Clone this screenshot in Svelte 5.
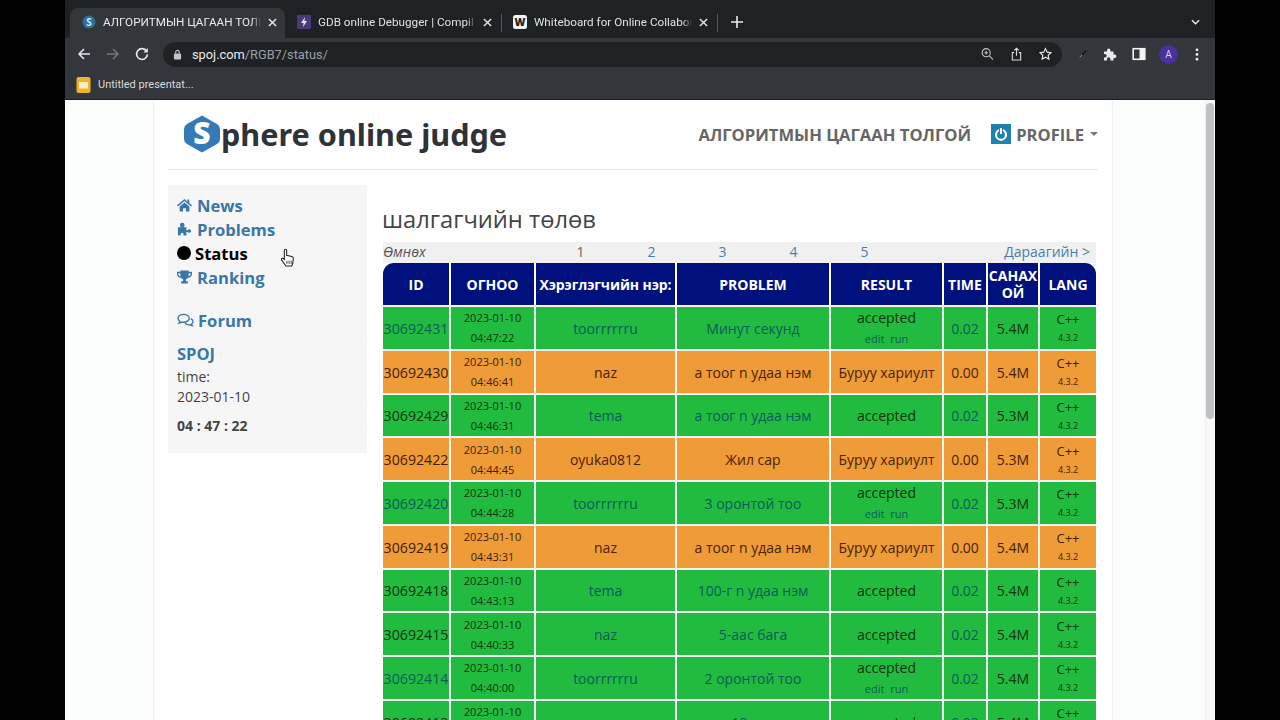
<script>
  const rows = [
    { id: '30692431', t: '04:47:22', u: 'toorrrrrru', p: 'Минут секунд', ok: true, er: true, tm: '0.02', m: '5.4M', idl: true },
    { id: '30692430', t: '04:46:41', u: 'naz', p: 'а тоог n удаа нэм', ok: false, tm: '0.00', m: '5.4M' },
    { id: '30692429', t: '04:46:31', u: 'tema', p: 'а тоог n удаа нэм', ok: true, tm: '0.02', m: '5.3M' },
    { id: '30692422', t: '04:44:45', u: 'oyuka0812', p: 'Жил сар', ok: false, tm: '0.00', m: '5.3M' },
    { id: '30692420', t: '04:44:28', u: 'toorrrrrru', p: '3 оронтой тоо', ok: true, er: true, tm: '0.02', m: '5.3M', idl: true },
    { id: '30692419', t: '04:43:31', u: 'naz', p: 'а тоог n удаа нэм', ok: false, tm: '0.00', m: '5.4M' },
    { id: '30692418', t: '04:43:13', u: 'tema', p: '100-г n удаа нэм', ok: true, tm: '0.02', m: '5.4M' },
    { id: '30692415', t: '04:40:33', u: 'naz', p: '5-аас бага', ok: true, tm: '0.02', m: '5.4M' },
    { id: '30692414', t: '04:40:00', u: 'toorrrrrru', p: '2 оронтой тоо', ok: true, er: true, tm: '0.02', m: '5.4M', idl: true },
    { id: '30692413', t: '04:39:41', u: 'aaa', p: '18 нас', ok: true, tm: '0.02', m: '5.4M' }
  ];
  const heads = ['ID', 'ОГНОО', 'Хэрэглэгчийн нэр:', 'PROBLEM', 'RESULT', 'TIME', 'САНАХ ОЙ', 'LANG'];
  const pages = ['1', '2', '3', '4', '5'];
</script>

<div class="screen">
  <div class="browser">
    <div class="tabs">
      <div class="tab active">
        <svg class="fav" viewBox="0 0 14 14"><circle cx="7" cy="7" r="6.5" fill="#2f6f9f"/><text x="7" y="10.5" text-anchor="middle" font-size="10" font-weight="700" fill="#d5e6f2" font-family="Open Sans">S</text></svg>
        <span class="tab-title">АЛГОРИТМЫН ЦАГААН ТОЛГ</span>
        <svg class="x" viewBox="0 0 10 10"><path d="M1 1l8 8M9 1l-8 8" stroke="#e8eaed" stroke-width="1.5"/></svg>
      </div>
      <div class="tab">
        <svg class="fav" viewBox="0 0 14 14"><rect width="14" height="14" rx="1" fill="#4b3a78"/><path d="M8 2L4 8h2.6L6 12l4-6H7.4z" fill="#e8e4f2"/></svg>
        <span class="tab-title">GDB online Debugger | Compil</span>
        <svg class="x" viewBox="0 0 10 10"><path d="M1 1l8 8M9 1l-8 8" stroke="#e8eaed" stroke-width="1.5"/></svg>
      </div>
      <i class="sep"></i>
      <div class="tab">
        <svg class="fav" viewBox="0 0 14 14"><rect width="14" height="14" rx="2.5" fill="#f4f4f4"/><text x="7" y="11" text-anchor="middle" font-size="10.5" font-weight="800" fill="#222" font-family="Open Sans">W</text></svg>
        <span class="tab-title">Whiteboard for Online Collabor</span>
        <svg class="x" viewBox="0 0 10 10"><path d="M1 1l8 8M9 1l-8 8" stroke="#e8eaed" stroke-width="1.5"/></svg>
      </div>
      <i class="sep"></i>
      <svg class="plus" viewBox="0 0 12 12"><path d="M6 0v12M0 6h12" stroke="#e8eaed" stroke-width="1.6"/></svg>
      <svg class="chev" viewBox="0 0 10 6"><path d="M1 1l4 4 4-4" fill="none" stroke="#e8eaed" stroke-width="1.6"/></svg>
    </div>

    <div class="toolbar">
      <svg class="nav" viewBox="0 0 14 14"><path d="M13 7H2M7 2L2 7l5 5" fill="none" stroke="#e8eaed" stroke-width="1.5"/></svg>
      <svg class="nav" viewBox="0 0 14 14"><path d="M1 7h11M7 2l5 5-5 5" fill="none" stroke="#75777a" stroke-width="1.5"/></svg>
      <svg class="nav" viewBox="0 0 14 14"><path d="M11.6 4.2A5.4 5.4 0 1 0 12.4 7.4" fill="none" stroke="#e8eaed" stroke-width="1.6"/><path d="M12.8 1v4.4H8.4z" fill="#e8eaed"/></svg>
      <div class="omni">
        <svg class="lock" viewBox="0 0 10 12"><rect x="1" y="5" width="8" height="6.5" rx="1" fill="#c4c7ca"/><path d="M3 5V3.4a2 2 0 0 1 4 0V5" fill="none" stroke="#c4c7ca" stroke-width="1.2"/></svg>
        <span class="url">spoj.com<span class="dim">/RGB7/status/</span></span>
        <span class="grow"></span>
        <svg class="oi" viewBox="0 0 14 14"><circle cx="5.6" cy="5.6" r="4.4" fill="none" stroke="#bdc1c6" stroke-width="1.2"/><path d="M9 9l4 4M3.6 5.6h4M5.6 3.6v4" stroke="#bdc1c6" stroke-width="1.2"/></svg>
        <svg class="oi" viewBox="0 0 14 14"><path d="M4.5 5.5H2.5v8h9v-8h-2M7 9V1M4.6 3.2L7 .9l2.4 2.3" fill="none" stroke="#dadce0" stroke-width="1.2"/></svg>
        <svg class="oi" viewBox="0 0 14 14"><path d="M7 1.2l1.8 3.8 4.1.5-3 2.9.8 4.1L7 10.500l-3.700 2 .8-4.100-3-2.900 4.100-.5z" fill="none" stroke="#e8eaed" stroke-width="1.200"/></svg>
      </div>
      <svg class="ext pen" viewBox="0 0 12 12"><path d="M2 10l3-3" stroke="#8a8c8e" stroke-width="1.2"/><path d="M5 7l5-5" stroke="#111" stroke-width="1.4"/></svg>
      <svg class="ext" viewBox="0 0 14 14"><path d="M1 4.500h3V3.200a1.700 1.700 0 0 1 3.400 0v1.300h3.100v3h1.200a1.700 1.700 0 0 1 0 3.400h-1.200v2.600H7.400V12a1.700 1.700 0 0 0-3.400 0v1.500H1v-3.100h1a1.700 1.700 0 0 0 0-3.400H1z" fill="#e8eaed"/></svg>
      <svg class="ext" viewBox="0 0 14 14"><rect x="1.200" y="1.700" width="11.600" height="10.600" fill="none" stroke="#f1f3f4" stroke-width="1.600"/><rect x="7.500" y="2" width="5" height="10" fill="#f1f3f4"/></svg>
      <span class="avatar">A</span>
      <svg class="dots" viewBox="0 0 4 14"><circle cx="2" cy="2" r="1.500" fill="#e8eaed"/><circle cx="2" cy="7" r="1.500" fill="#e8eaed"/><circle cx="2" cy="12" r="1.500" fill="#e8eaed"/></svg>
    </div>

    <div class="bookmarks">
      <svg class="slides" viewBox="0 0 14 16"><rect width="14" height="16" rx="2" fill="#f0b429"/><rect x="2.500" y="5" width="9" height="6.500" fill="#fbeec2"/></svg>
      <span>Untitled presentat...</span>
    </div>

    <div class="page">
      <div class="container">
        <header class="site-head">
          <div class="logo">
            <svg class="hex" viewBox="0 0 36 38"><path d="M18 0.500L33 9q3 1.800 3 5v10q0 3.200-3 5L18 37.500 3 29q-3-1.800-3-5V14q0-3.200 3-5z" fill="#337ab7"/><text x="18" y="29" text-anchor="middle" font-size="30" font-weight="800" fill="#fff" font-family="Open Sans">S</text></svg>
            <span>phere online judge</span>
          </div>
          <div class="head-right">
            <span class="cname">АЛГОРИТМЫН ЦАГААН ТОЛГОЙ</span>
            <svg class="power" viewBox="0 0 20 20"><rect width="20" height="20" fill="#1f7fae"/><circle cx="10" cy="10.800" r="5" fill="none" stroke="#fff" stroke-width="2.200"/><path d="M10 4v6" stroke="#1f7fae" stroke-width="4"/><path d="M10 4v6" stroke="#fff" stroke-width="2"/></svg>
            <span class="profile">PROFILE</span>
            <i class="caret"></i>
          </div>
        </header>

        <div class="columns">
          <aside class="side">
            <a class="item" href="#n"><svg class="ic" viewBox="0 0 16 14"><path d="M8 .5L0 7.300l1 1.200L8 2.700l7 5.800 1-1.200-3-2.500V1h-2v2.600zM2.800 8.700V14h3.700v-3.500h3V14h3.700V8.700L8 4.300z" fill="#3a77a8"/></svg>News</a>
            <a class="item" href="#p"><svg class="ic" viewBox="0 0 16 14"><path d="M1 5h3.200C3.500 4.300 3.100 3.600 3.100 2.800a2.500 2.500 0 0 1 5 0c0 .8-.4 1.500-1.100 2.200h3v3.200h1.300c.5-.6 1-.9 1.800-.9a1.900 1.900 0 0 1 0 3.800c-.8 0-1.300-.3-1.800-.9H10V14H7v-1.500a1.600 1.600 0 1 0-3.200 0V14H1z" fill="#3a77a8"/></svg>Problems</a>
            <a class="item cur" href="#s"><i class="dot"></i>Status</a>
            <a class="item" href="#r"><svg class="ic" viewBox="0 0 16 14"><path d="M3.500 0h9v1.500H16V4c0 2-1.700 3.600-4.300 3.900-.6.800-1.300 1.300-2.200 1.600v2h2V14h-7v-2.500h2v-2c-.9-.3-1.600-.8-2.200-1.600C1.700 7.600 0 6 0 4V1.500h3.500zM1.500 3v1c0 1 .8 1.900 2.300 2.300-.2-1-.3-2-.3-3.300zm13 0h-2c0 1.300-.1 2.300-.3 3.300 1.500-.4 2.300-1.300 2.300-2.300z" fill="#3a77a8"/></svg>Ranking</a>
            <a class="item forum" href="#f"><svg class="ic wide" viewBox="0 0 18 14"><path d="M7 1c3.300 0 6 1.900 6 4.200s-2.700 4.200-6 4.200c-.6 0-1.300-.1-1.800-.2-.9.700-2 1-3.200 1.100.6-.6 1-1.300 1.100-2C1.800 7.500 1 6.400 1 5.200 1 2.900 3.700 1 7 1z" fill="none" stroke="#3a77a8" stroke-width="1.400"/><path d="M14.500 5.500c1.500.7 2.500 1.900 2.500 3.200 0 1-.6 2-1.600 2.600.1.600.5 1.200 1 1.700-1-.1-2-.4-2.800-1-1.900.3-4-.3-5.100-1.500" fill="none" stroke="#3a77a8" stroke-width="1.400"/></svg>Forum</a>
            <a class="spoj" href="#j">SPOJ</a>
            <p class="clock-l">time:</p>
            <p class="clock-l">2023-01-10</p>
            <p class="clock"><b>04 : 47 : 22</b></p>
          </aside>

          <main class="content">
            <h3>шалгагчийн төлөв</h3>
            <div class="pager">
              <em>Өмнөх</em>
              {#each pages as p, i}<a class="pn" class:first={i === 0} href="#x">{p}</a>{/each}
              <a class="next" href="#x">Дараагийн &gt;</a>
            </div>
            <table>
              <colgroup>
                <col class="c1" /><col class="c2" /><col class="c3" /><col class="c4" /><col class="c5" /><col class="c6" /><col class="c7" /><col class="c8" />
              </colgroup>
              <thead>
                <tr>{#each heads as h}<th>{h}</th>{/each}</tr>
              </thead>
              <tbody>
                {#each rows as r}
                  <tr class={r.ok ? 'good' : 'bad'}>
                    <td class="idc" class:lnk={r.idl}>{r.id}</td>
                    <td class="sm"><div>2023-01-10</div><div>{r.t}</div></td>
                    <td class="link">{r.u}</td>
                    <td class="link">{r.p}</td>
                    <td class="res">
                      <div>{r.ok ? 'accepted' : 'Буруу хариулт'}</div>
                      {#if r.er}<div class="er">edit&nbsp; run</div>{/if}
                    </td>
                    <td class="tm">{r.tm}</td>
                    <td>{r.m}</td>
                    <td class="lang"><div>C++</div><div class="ver">4.3.2</div></td>
                  </tr>
                {/each}
              </tbody>
            </table>
          </main>
        </div>
      </div>
      <div class="scrollbar"><i></i></div>
      <svg class="cursor" viewBox="0 0 14 18"><path d="M4 8V2.200a1.100 1.100 0 0 1 2.200 0V7l4.800 1c1 .2 1.600 1 1.500 2l-.5 4.500-1 2.500H5.500L1.800 12c-.8-1-.5-2 .3-2.200.6-.1 1.300.3 1.900 1z" fill="#fff" stroke="#222" stroke-width="1"/><path d="M6.500 12v3M8.500 12v3M10.500 12v3" stroke="#222" stroke-width=".8"/></svg>
    </div>
  </div>
</div>

<style>
  :global(body) { margin: 0; background: #000; }
  .screen { width: 1280px; height: 720px; overflow: hidden; background: #000; padding: 0 65px; box-sizing: border-box; font-family: "Open Sans", "Noto Sans", sans-serif; }
  .browser { width: 1150px; height: 720px; overflow: hidden; display: flex; flex-direction: column; }
  .tabs { height: 38px; flex: none; background: #1f2224; display: flex; align-items: flex-end; padding-left: 5px; box-sizing: border-box; }
  .tab { width: 215px; height: 30px; display: flex; align-items: center; padding: 0 5px 2px 12px; box-sizing: border-box; flex: none; color: #dee1e4; gap: 7px; }
  .tab.active { background: #33363a; border-radius: 8px 8px 0 0; color: #e8eaed; }
  .fav { width: 14px; height: 14px; flex: none; }
  .tab-title { font: 11.700px/16px "Roboto", sans-serif; white-space: nowrap; overflow: hidden; flex: 1; -webkit-mask-image: linear-gradient(90deg, #000 94%, transparent); mask-image: linear-gradient(90deg, #000 94%, transparent); }
  .x { width: 9px; height: 9px; flex: none; margin-right: 3px; }
  .sep { width: 1px; height: 18px; background: #55585c; align-self: center; margin: 8px -1px 0 1px; flex: none; }
  .plus { width: 12px; height: 12px; margin: 0 0 10px 14px; flex: none; }
  .chev { width: 9px; height: 6px; margin: 0 15px 13px auto; flex: none; }
  .toolbar { height: 32px; flex: none; background: #33363a; display: flex; align-items: center; padding: 0 0 0 12px; box-sizing: border-box; }
  .nav { width: 14px; height: 14px; margin-right: 15px; flex: none; }
  .omni { margin-left: -1px; width: 899px; height: 25px; background: #1f2224; border-radius: 13px; display: flex; align-items: center; padding: 0 10px; box-sizing: border-box; flex: none; }
  .lock { width: 9px; height: 11px; flex: none; margin-right: 10px; }
  .url { font: 12.800px/16px "Roboto", sans-serif; color: #e8eaed; margin-top: 1px; }
  .dim { color: #9aa0a6; }
  .grow { flex: 1; }
  .oi { width: 13px; height: 14px; margin-left: 16px; flex: none; }
  .oi:first-of-type { margin-left: 0; }
  .ext { width: 14px; height: 14px; margin-left: 15px; flex: none; }
  .pen { width: 10px; height: 10px; margin-left: 16px; }
  .avatar { width: 19px; height: 19px; border-radius: 50%; background: #4a2f9e; color: #d8d3f0; font: 10px/19px "Roboto", sans-serif; text-align: center; margin-left: 13px; flex: none; }
  .dots { width: 4px; height: 13px; margin-left: 17px; flex: none; }
  .bookmarks { height: 29px; flex: none; background: #33363a; border-bottom: 1px solid #1c1e20; box-sizing: content-box; display: flex; align-items: center; padding-left: 11px; color: #d8dadd; font: 11px/14px "Roboto", sans-serif; gap: 7px; }
  .slides { width: 15px; height: 16px; flex: none; }
  .page { flex: 1; background: #fbfcfc; display: flex; position: relative; padding-left: 88px; min-height: 0; overflow: hidden; }
  .container { width: 960px; box-sizing: border-box; background: #fff; border-left: 1px solid #f0f1f2; border-right: 1px solid #f0f1f2; padding: 0 14px; flex: none; }
  .site-head { height: 69px; border-bottom: 1px solid #e6e6e6; display: flex; align-items: center; justify-content: space-between; }
  .logo { display: flex; align-items: center; padding-left: 16px; color: #2e3338; font: 700 30.600px/38px "Noto Sans", sans-serif; margin-top: -2px; }
  .hex { width: 36px; height: 38px; margin-right: 1px; flex: none; }
  .head-right { display: flex; align-items: center; color: #666; font-size: 16.600px; font-weight: 700; margin-top: -1px; }
  .cname { margin-right: 20px; }
  .power { width: 20px; height: 20px; margin-right: 5px; }
  .caret { width: 0; height: 0; border: 4px solid transparent; border-top-color: #777; border-bottom-width: 0; margin-left: 6px; }
  .columns { display: flex; padding-top: 15px; }
  .side { width: 199px; height: 268px; background: #f6f6f7; box-sizing: border-box; padding: 8px 9px; flex: none; color: #444; }
  .item { display: flex; align-items: center; height: 24px; font-size: 16.600px; font-weight: 700; color: #3a77a8; text-decoration: none; }
  .ic { width: 15px; height: 14px; margin-right: 5px; flex: none; }
  .wide { width: 17px; margin-right: 4px; }
  .cur { color: #000; }
  .dot { width: 14px; height: 14px; background: #000; border-radius: 50%; margin-right: 4px; flex: none; }
  .forum { margin-top: 19px; }
  .spoj { display: block; margin: 10px 0 1px; font-size: 16.500px; line-height: 24px; font-weight: 700; color: #3a77a8; text-decoration: none; }
  .clock-l { margin: 0; font-size: 14px; line-height: 20px; color: #444; }
  .clock { margin: 9px 0 0; font-size: 14px; line-height: 20px; color: #444; }
  .content { padding: 19px 0 0 15px; flex: 1; min-width: 0; }
  h3 { margin: 0 0 8px; font-size: 23.700px; line-height: 30px; font-weight: 400; color: #444; }
  .pager { margin-left: 1px; width: 713px; height: 21px; padding-bottom: 2px; box-sizing: border-box; background: #f0f0f0; display: flex; align-items: center; font-size: 14px; color: #337ab7; }
  .pager em { color: #555; width: 162px; flex: none; }
  .pn { width: 71px; flex: none; text-align: center; color: #4a7ea8; text-decoration: none; }
  .pn.first { color: #666; }
  .next { margin-left: auto; padding-right: 6px; color: #4a7ea8; text-decoration: none; }
  table { margin-left: 1px; width: 713px; table-layout: fixed; border-collapse: separate; border-spacing: 0; font-size: 14px; text-align: center; }
  .c1 { width: 68px; } .c2 { width: 85px; } .c3 { width: 141px; } .c4 { width: 154px; } .c5 { width: 113px; } .c6 { width: 44px; } .c7 { width: 52px; } .c8 { width: 56px; }
  th { height: 42px; box-sizing: border-box; background: #00107c; color: #fff; font-size: 14px; font-weight: 700; line-height: 17px; padding: 0; border-right: 2px solid #fff; white-space: normal; }
  th:first-child { border-top-left-radius: 11px; }
  th:last-child { border-top-right-radius: 11px; border-right: 0; }
  th:nth-child(3) { white-space: nowrap; letter-spacing: -0.100px; }
  td { height: 43.750px; box-sizing: border-box; padding: 1px 0 0; border-right: 2px solid #f4f6f4; border-top: 2px solid #f4f6f4; color: #0c330c; }
  td:last-child { border-right: 0; }
  .good td { background: #21bc3f; }
  .bad td { background: #ee9b38; color: #3f1c00; }
  .good .link, .good .tm, .good .er, .good .lnk { color: #0b5a5c; }
  .bad .link, .bad .tm, .bad .res { color: #4a1f00; }
  .idc { font-size: 14.200px; white-space: nowrap; }
  .sm { font-size: 11px; line-height: 20px; }
  .res { line-height: 19px; }
  .er { font-size: 11px; line-height: 16px; margin: 3.500px 0 2px; }
  .lang { font-size: 13px; line-height: 20px; }
  .ver { font-size: 9px; line-height: 18px; }
  .scrollbar { width: 10px; position: absolute; right: 0; top: 0; bottom: 0; background: #f8f8f9; border-left: 1px solid #eee; box-sizing: border-box; }
  .scrollbar i { display: block; margin: 3px 0 0 0; width: 8px; height: 316px; background: #c0c1c4; border-radius: 4px; }
  .cursor { position: absolute; left: 215px; top: 148px; width: 15px; height: 19px; }
</style>
